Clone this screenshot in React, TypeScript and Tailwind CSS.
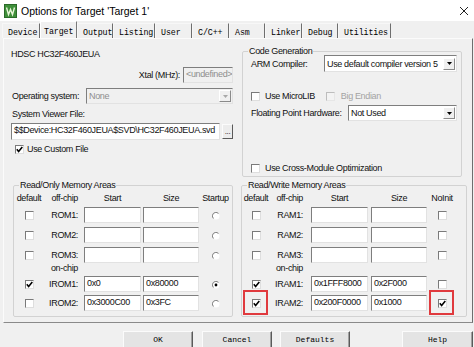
import React from "react";

const sunken =
  "border border-t-[#7e7e7e] border-l-[#7e7e7e] border-r-[#e2e2e2] border-b-[#e2e2e2]";

function Check({ checked = false, disabled = false }: { checked?: boolean; disabled?: boolean }) {
  return (
    <span
      className={
        disabled
          ? "flex w-[9px] h-[9px] border border-t-[#bdbdbd] border-l-[#bdbdbd] border-r-[#e6e6e6] border-b-[#e6e6e6] bg-[#f3f3f3]"
          : "flex w-[9px] h-[9px] border border-t-[#7a7a7a] border-l-[#7a7a7a] border-r-[#dedede] border-b-[#dedede] bg-white"
      }
    >
      {checked && (
        <svg width="7" height="7" viewBox="0 0 7 7" className="m-auto">
          <path d="M0.8 3.3 L2.6 5.4 L6.3 1" fill="none" stroke="#000" strokeWidth="1.6" />
        </svg>
      )}
    </span>
  );
}

function Radio({ selected = false }: { selected?: boolean }) {
  return (
    <svg width="8" height="8" viewBox="0 0 8 8">
      <circle cx="4" cy="4" r="3.5" fill="#ffffff" />
      <path d="M1.4 6.5 A3.4 3.4 0 0 1 6.5 1.4" stroke="#7a7a7a" strokeWidth="1" fill="none" />
      {selected && <circle cx="4" cy="4" r="1.4" fill="#000" />}
    </svg>
  );
}

function Field({ className, value = "", disabled = false }: { className: string; value?: string; disabled?: boolean }) {
  return (
    <div
      className={
        sunken +
        " h-[16px] flex items-start pl-[2px] pt-[1px] leading-[11px] whitespace-nowrap overflow-hidden " +
        (disabled ? "bg-[#f0f0f0] text-[#8e8e8e]" : "bg-white text-[#111]") +
        " " +
        className
      }
    >
      {value}
    </div>
  );
}

function Select({ className, value, disabled = false }: { className: string; value: string; disabled?: boolean }) {
  return (
    <div
      className={
        sunken +
        " flex items-center h-[16px] " +
        (disabled ? "bg-[#f0f0f0] text-[#8e8e8e]" : "bg-white text-[#111]") +
        " " +
        className
      }
    >
      <span className="flex-1 pl-[2px] leading-[14px] whitespace-nowrap overflow-hidden">{value}</span>
      <span className="flex w-[12px] h-[12px] mr-[1px] items-center justify-center border border-t-white border-l-white border-r-[#8a8a8a] border-b-[#8a8a8a] bg-[#f0f0f0]">
        <svg width="5" height="3" viewBox="0 0 5 3">
          <path d="M0 0 H5 L2.5 3 Z" fill={disabled ? "#a8a8a8" : "#000"} />
        </svg>
      </span>
    </div>
  );
}

function Tab({ label, w, selected = false }: { label: string; w: string; selected?: boolean }) {
  return (
    <div
      className={
        (selected
          ? "h-[17px] bg-[#f0f0f0] border-l border-t border-r border-l-white border-t-white border-r-[#7a7a7a] pt-[3px] pl-[3px] "
          : "h-[15px] border-l border-t border-r border-l-[#f7f7f7] border-t-[#f7f7f7] border-r-[#6e6e6e] pt-[2px] pl-[5px] ") +
        w
      }
    >
      <span className="leading-[10px] text-[8.3px] tracking-[-0.1px] text-black font-['Liberation_Mono',monospace] whitespace-nowrap">
        {label}
      </span>
    </div>
  );
}

function Btn({ label, className }: { label: string; className: string }) {
  return (
    <div
      className={
        "h-[18px] flex items-center justify-center bg-[#e4e4e4] border border-t-[#fbfbfb] border-l-[#fbfbfb] border-r-[#5a5a5a] border-b-[#5a5a5a] shadow-[inset_-1px_-1px_0_#a0a0a0] text-[8px] tracking-normal font-['Liberation_Mono',monospace] text-black " +
        className
      }
    >
      {label}
    </div>
  );
}

type RomRow = { def: boolean; label: string; start: string; size: string; startup: boolean };
type RamRow = { def: boolean; label: string; start: string; size: string; noinit: boolean; mark?: boolean };

const roms: RomRow[] = [
  { def: false, label: "ROM1:", start: "", size: "", startup: false },
  { def: false, label: "ROM2:", start: "", size: "", startup: false },
  { def: false, label: "ROM3:", start: "", size: "", startup: false },
  { def: true, label: "IROM1:", start: "0x0", size: "0x80000", startup: true },
  { def: false, label: "IROM2:", start: "0x3000C00", size: "0x3FC", startup: false },
];

const rams: RamRow[] = [
  { def: false, label: "RAM1:", start: "", size: "", noinit: false },
  { def: false, label: "RAM2:", start: "", size: "", noinit: false },
  { def: false, label: "RAM3:", start: "", size: "", noinit: false },
  { def: true, label: "IRAM1:", start: "0x1FFF8000", size: "0x2F000", noinit: false },
  { def: true, label: "IRAM2:", start: "0x200F0000", size: "0x1000", noinit: true, mark: true },
];

function Marked({ children }: { children: React.ReactNode }) {
  return (
    <span className="relative flex">
      {children}
      <span className="absolute top-[-9px] bottom-[-7px] left-[-9px] right-[-7px] border-2 border-[#e03a3e]" />
    </span>
  );
}

function RomLine({ r }: { r: RomRow }) {
  return (
    <div className="mt-[4px] flex items-center h-[16px]">
      <div className="w-[30px] flex justify-center">
        <Check checked={r.def} />
      </div>
      <div className="w-[40px] text-right pr-[6px] leading-[10px] whitespace-nowrap">{r.label}</div>
      <Field className="w-[57px]" value={r.start} />
      <Field className="ml-[2px] w-[56px]" value={r.size} />
      <div className="w-[33px] flex justify-center pt-[2px]">
        <Radio selected={r.startup} />
      </div>
    </div>
  );
}

function RamLine({ r }: { r: RamRow }) {
  return (
    <div className="mt-[4px] flex items-center h-[16px]">
      <div className="w-[28px] flex justify-center">
        {r.mark ? (
          <Marked>
            <Check checked={r.def} />
          </Marked>
        ) : (
          <Check checked={r.def} />
        )}
      </div>
      <div className="w-[41px] text-right pr-[8px] leading-[10px] whitespace-nowrap">{r.label}</div>
      <Field className="w-[57px]" value={r.start} />
      <Field className="ml-[3px] w-[56px]" value={r.size} />
      <div className="w-[30px] flex justify-center">
        {r.mark ? (
          <Marked>
            <Check checked={r.noinit} />
          </Marked>
        ) : (
          <Check checked={r.noinit} />
        )}
      </div>
    </div>
  );
}

export default function App() {
  return (
    <div className="w-[474px] h-[347px] overflow-hidden bg-[#f0f0f0] text-[9px] tracking-[-0.35px] text-[#111] font-['Liberation_Sans',Arial,sans-serif]">
      {/* Title bar */}
      <div className="h-[21px] bg-white flex items-center">
        <svg width="13" height="14" viewBox="0 0 13 14" className="ml-[4px]">
          <rect x="0.5" y="0.5" width="12" height="13" fill="#3f8f3a" stroke="#2a6a28" />
          <path d="M2.5 3.5 L4.5 10.5 L6.5 5.5 L8.5 10.5 L10.5 3.5" fill="none" stroke="#e8f5d8" strokeWidth="1.4" />
        </svg>
        <span className="ml-[4px] text-[10.5px] tracking-normal leading-[12px] text-black">
          Options for Target 'Target 1'
        </span>
        <svg width="10" height="10" viewBox="0 0 10 10" className="ml-auto mr-[5px]">
          <path d="M1 1 L9 9 M9 1 L1 9" stroke="#222" strokeWidth="1" />
        </svg>
      </div>

      {/* Tabs */}
      <div className="h-[17px] flex items-end pl-[2px]">
        <Tab label="Device" w="w-[38px]" />
        <Tab label="Target" w="w-[37px]" selected />
        <Tab label="Output" w="w-[36px]" />
        <Tab label="Listing" w="w-[42px]" />
        <Tab label="User" w="w-[37px]" />
        <Tab label="C/C++" w="w-[37px]" />
        <Tab label="Asm" w="w-[36px]" />
        <Tab label="Linker" w="w-[37px]" />
        <Tab label="Debug" w="w-[36px]" />
        <Tab label="Utilities" w="w-[53px]" />
      </div>

      {/* Panel */}
      <div className="ml-[3px] w-[470px] h-[285px] border border-t-[#fbfbfb] border-l-[#fbfbfb] border-r-[#6e6e6e] border-b-[#8a8a8a] pl-[7px]">
        <div className="flex h-[141px]">
          {/* left top */}
          <div className="w-[222px] flex flex-col">
            <div className="mt-[10px] h-[10px] leading-[10px]">HDSC HC32F460JEUA</div>
            <div className="mt-[8px] h-[16px] flex items-center justify-end">
              <span className="leading-[10px] whitespace-nowrap">Xtal (MHz):</span>
              <Field className="ml-[3px] w-[50px]" value="<undefined>" disabled />
            </div>
            <div className="mt-[5px] h-[16px] flex items-center">
              <span className="pl-[1px] leading-[10px] whitespace-nowrap">Operating system:</span>
              <Select className="ml-auto w-[147px]" value="None" disabled />
            </div>
            <div className="mt-[5px] h-[10px] pl-[1px] leading-[10px]">System Viewer File:</div>
            <div className="mt-[4px] h-[17px] flex items-center">
              <Field className="w-[209px] h-[17px]" value="$$Device:HC32F460JEUA$SVD\HC32F460JEUA.svd" />
              <div className="ml-[2px] w-[11px] h-[15px] flex items-end justify-center pb-[3px] bg-[#ececec] border border-t-[#fbfbfb] border-l-[#fbfbfb] border-r-[#5a5a5a] border-b-[#5a5a5a] text-[8px] leading-[6px]">
                ...
              </div>
            </div>
            <div className="mt-[4px] h-[10px] flex items-center pl-[4px]">
              <Check checked />
              <span className="ml-[3px] leading-[10px]">Use Custom File</span>
            </div>
          </div>

          {/* right top: Code Generation */}
          <div className="ml-[8px] w-[226px]">
            <fieldset className="mt-[7px] ml-[1px] w-[220px] h-[131px] border border-[#d2d2d2] rounded-[2px] pl-[8px] pr-[4px]">
              <legend className="ml-[-3px] px-[1px] leading-[10px]">Code Generation</legend>
              <div className="-mt-[1px] h-[17px] flex items-center">
                <span className="leading-[10px] whitespace-nowrap">ARM Compiler:</span>
                <Select className="ml-auto w-[133px] h-[17px]" value="Use default compiler version 5" />
              </div>
              <div className="mt-[19px] h-[10px] flex items-center">
                <Check />
                <span className="ml-[5px] leading-[10px]">Use MicroLIB</span>
                <span className="ml-[11px]">
                  <Check disabled />
                </span>
                <span className="ml-[6px] leading-[10px] text-[#a3a3a3]">Big Endian</span>
              </div>
              <div className="mt-[4px] h-[16px] flex items-center">
                <span className="leading-[10px] whitespace-nowrap">Floating Point Hardware:</span>
                <Select className="ml-auto w-[109px]" value="Not Used" />
              </div>
              <div className="mt-[42px] h-[10px] flex items-center">
                <Check />
                <span className="ml-[5px] leading-[10px]">Use Cross-Module Optimization</span>
              </div>
            </fieldset>
          </div>
        </div>

        {/* bottom groups */}
        <div className="flex">
          <fieldset className="ml-[2px] w-[220px] h-[137px] border border-[#d2d2d2] rounded-[2px]">
            <legend className="ml-[5px] px-[1px] leading-[10px]">Read/Only Memory Areas</legend>
            <div className="mt-[3px] h-[10px] flex items-center leading-[10px] whitespace-nowrap">
              <div className="w-[30px] text-center">default</div>
              <div className="w-[40px] text-right pr-[6px]">off-chip</div>
              <div className="w-[57px] text-center">Start</div>
              <div className="ml-[2px] w-[56px] text-center">Size</div>
              <div className="w-[33px] text-center">Startup</div>
            </div>
            {roms.slice(0, 3).map((r) => (
              <RomLine key={r.label} r={r} />
            ))}
            <div className="h-[10px] flex leading-[10px]">
              <div className="w-[70px] text-right pr-[6px]">on-chip</div>
            </div>
            {roms.slice(3).map((r) => (
              <div key={r.label} className="-mt-[1px]">
                <RomLine r={r} />
              </div>
            ))}
          </fieldset>

          <fieldset className="ml-[8px] w-[226px] h-[137px] border border-[#d2d2d2] rounded-[2px]">
            <legend className="ml-[5px] px-[1px] leading-[10px]">Read/Write Memory Areas</legend>
            <div className="mt-[3px] h-[10px] flex items-center leading-[10px] whitespace-nowrap">
              <div className="w-[28px] text-center">default</div>
              <div className="w-[41px] text-right pr-[8px]">off-chip</div>
              <div className="w-[57px] text-center">Start</div>
              <div className="ml-[3px] w-[56px] text-center">Size</div>
              <div className="w-[30px] text-center">NoInit</div>
            </div>
            {rams.slice(0, 3).map((r) => (
              <RamLine key={r.label} r={r} />
            ))}
            <div className="h-[10px] flex leading-[10px]">
              <div className="w-[69px] text-right pr-[8px]">on-chip</div>
            </div>
            {rams.slice(3).map((r) => (
              <div key={r.label} className="-mt-[1px]">
                <RamLine r={r} />
              </div>
            ))}
          </fieldset>
        </div>
      </div>

      {/* Buttons */}
      <div className="mt-[8px] flex pl-[123px]">
        <Btn label="OK" className="w-[70px]" />
        <Btn label="Cancel" className="ml-[9px] w-[70px]" />
        <Btn label="Defaults" className="ml-[8px] w-[70px]" />
        <Btn label="Help" className="ml-[52px] w-[71px]" />
      </div>
    </div>
  );
}
